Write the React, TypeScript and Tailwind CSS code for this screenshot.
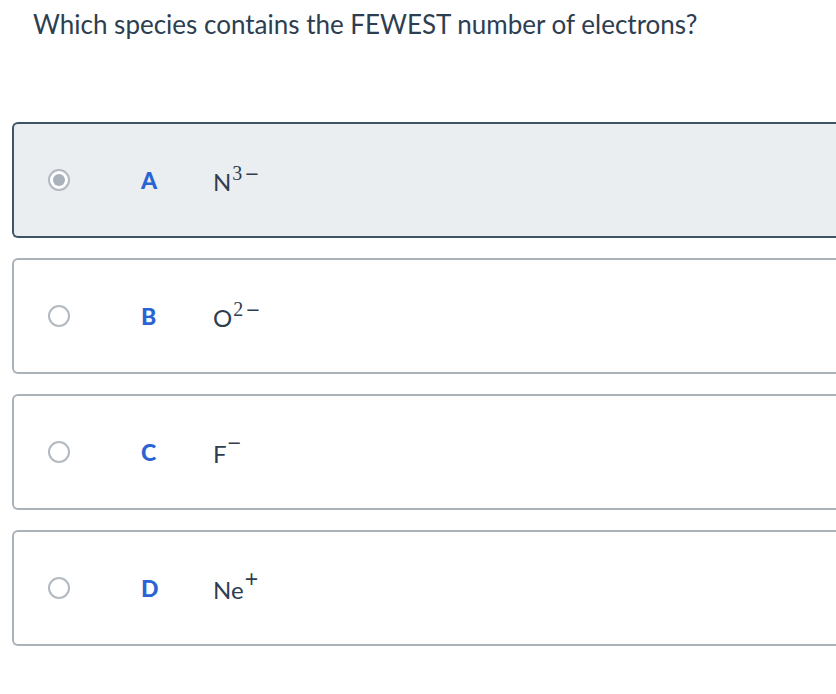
const options = [
  { letter: 'A', base: 'N', sup: '3', sign: '−', selected: true },
  { letter: 'B', base: 'O', sup: '2', sign: '−', selected: false },
  { letter: 'C', base: 'F', sup: '', sign: '−', selected: false },
  { letter: 'D', base: 'Ne', sup: '', sign: '+', selected: false },
]

function Radio({ checked }: { checked: boolean }) {
  return (
    <span className="flex h-[22px] w-[22px] shrink-0 items-center justify-center rounded-full border-2 border-[#b2b9c1] bg-white">
      {checked && <span className="h-[12px] w-[12px] rounded-full bg-[#a9b1ba]" />}
    </span>
  )
}

export default function App() {
  return (
    <div className="h-[694px] w-[836px] overflow-hidden bg-white font-['Lato','Noto_Sans',sans-serif] text-[#2d3e50]">
      <h1 className="pl-[33px] pt-[6px] text-[26px] font-normal leading-[36px]">
        Which species contains the FEWEST number of electrons?
      </h1>

      <div className="mt-[80px] flex w-[840px] flex-col gap-[20px] pl-[12px]">
        {options.map((o) => (
          <label
            key={o.letter}
            className={
              o.selected
                ? 'flex h-[116px] items-center rounded-l-[6px] border-2 border-r-0 border-[#3d5366] bg-[#ebeef1]'
                : 'flex h-[116px] items-center rounded-l-[6px] border-2 border-r-0 border-[#a9b1b9] bg-white'
            }
          >
            <span className="pl-[34px]">
              <Radio checked={o.selected} />
            </span>
            <span className="ml-[71px] w-[20px] text-[23px] font-black text-[#2a63d3]">{o.letter}</span>
            <span className="ml-[52px] flex items-start text-[24px] leading-none text-[#2d3e50]">
              <span className="pt-[3px]">{o.base}</span>
              <span className="-mt-[4px] ml-[1px] flex items-start font-['Liberation_Serif','DejaVu_Serif',serif] text-[20px] leading-none">
                {o.sup && <span>{o.sup}</span>}
                <span
                  className={
                    o.sup
                      ? 'ml-[3px] font-["Liberation_Sans",sans-serif] text-[23px] font-normal'
                      : '-mt-[3px] font-["Liberation_Sans",sans-serif] text-[23px] font-normal'
                  }
                >
                  {o.sign}
                </span>
              </span>
            </span>
          </label>
        ))}
      </div>
    </div>
  )
}
